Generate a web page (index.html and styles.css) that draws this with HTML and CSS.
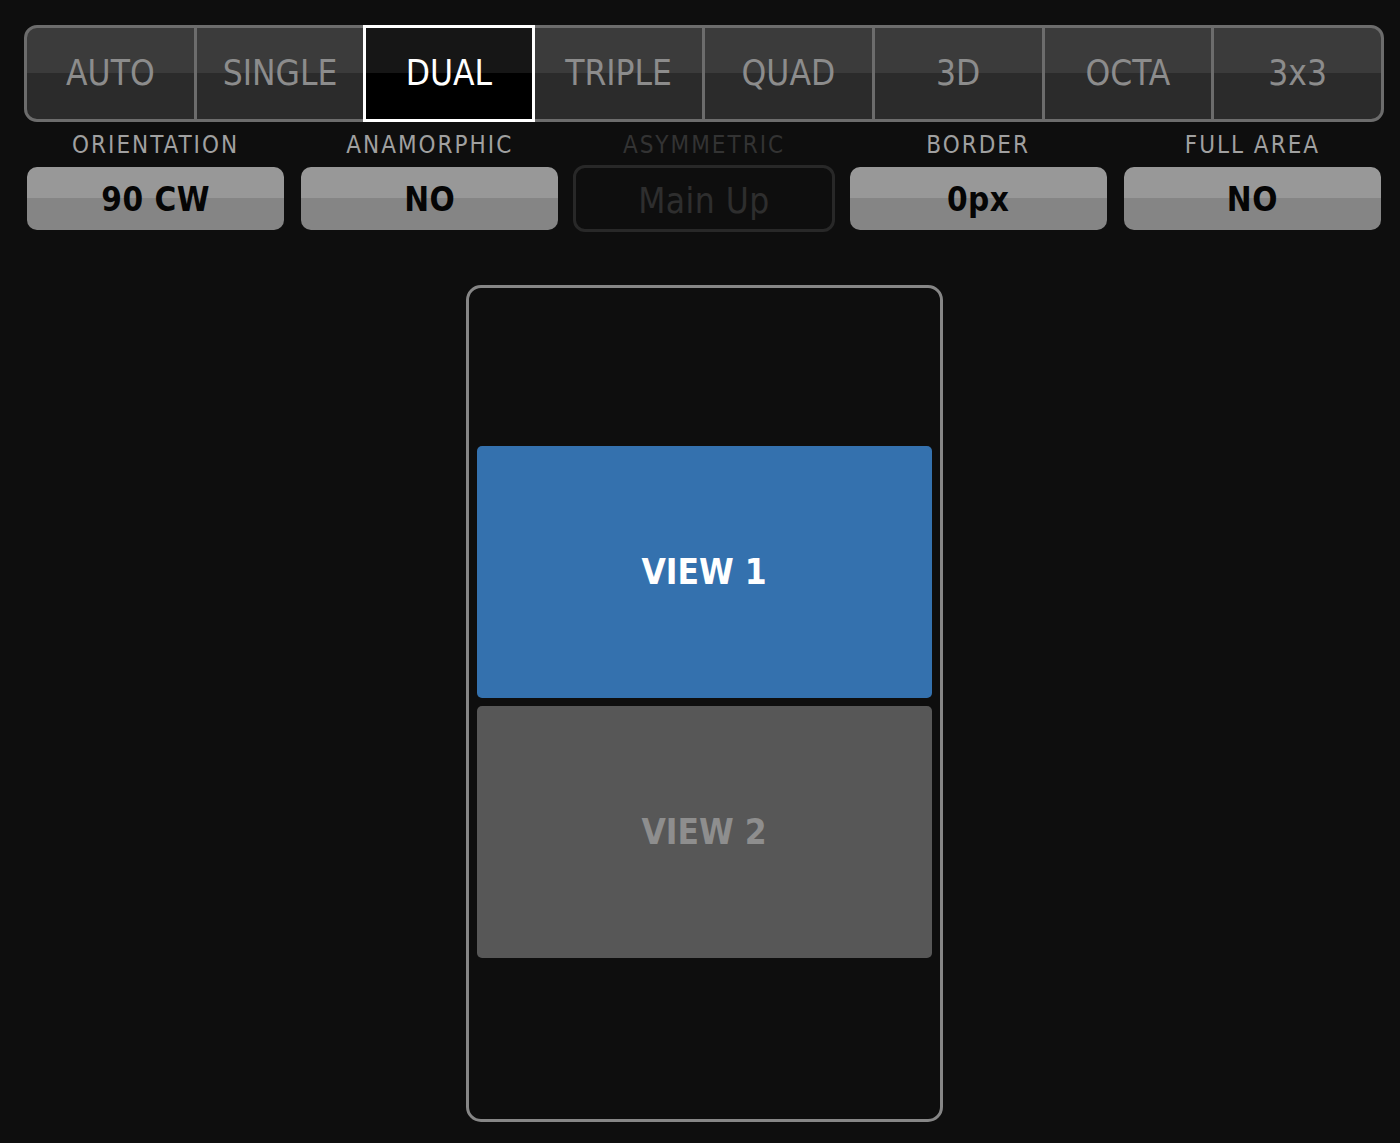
FILE: index.html
```html
<!DOCTYPE html>
<html lang="en">
<head>
<meta charset="utf-8">
<title>Layout</title>
<link rel="stylesheet" href="styles.css">
</head>
<body>
<div class="page">
  <div class="segbar">
    <div class="seg">AUTO</div>
    <div class="seg">SINGLE</div>
    <div class="seg active">DUAL</div>
    <div class="seg">TRIPLE</div>
    <div class="seg">QUAD</div>
    <div class="seg">3D</div>
    <div class="seg">OCTA</div>
    <div class="seg">3x3</div>
  </div>
  <div class="options">
    <div class="opt">
      <div class="opt-label">ORIENTATION</div>
      <div class="opt-btn">90 CW</div>
    </div>
    <div class="opt">
      <div class="opt-label">ANAMORPHIC</div>
      <div class="opt-btn">NO</div>
    </div>
    <div class="opt disabled">
      <div class="opt-label">ASYMMETRIC</div>
      <div class="opt-btn">Main Up</div>
    </div>
    <div class="opt">
      <div class="opt-label">BORDER</div>
      <div class="opt-btn">0px</div>
    </div>
    <div class="opt">
      <div class="opt-label">FULL AREA</div>
      <div class="opt-btn">NO</div>
    </div>
  </div>
  <div class="preview-wrap">
    <div class="preview">
      <div class="view view-main">VIEW 1</div>
      <div class="view view-second">VIEW 2</div>
    </div>
  </div>
</div>
</body>
</html>
```

FILE: styles.css
```css
html, body {
  margin: 0;
  padding: 0;
  background: #0e0e0e;
}
body {
  font-family: "DejaVu Sans Condensed", "DejaVu Sans", sans-serif;
  font-stretch: condensed;
  width: 1400px;
  height: 1143px;
  overflow: hidden;
}
.page {
  padding: 25px 0 0 0;
}
.segbar {
  margin-left: 24px;
  width: 1360px;
  height: 97px;
  box-sizing: border-box;
  border: 3px solid #6c6c6c;
  border-radius: 13px;
  display: flex;
  background: linear-gradient(to bottom, #3b3b3b 0, #3b3b3b 49%, #2b2b2b 49%, #2b2b2b 100%);
}
.seg {
  flex: 1;
  display: flex;
  align-items: center;
  justify-content: center;
  color: #8c8c8c;
  font-size: 35px;
  letter-spacing: 0;
  padding-bottom: 2px;
  border-left: 3px solid #6c6c6c;
}
.seg:first-child {
  border-left: none;
}
.seg.active {
  color: #ffffff;
  border: 3px solid #ffffff;
  margin: -3px 0 -3px -1px;
  background: linear-gradient(to bottom, #161616 0, #161616 49%, #000 49%, #000 100%);
}
.seg.active + .seg {
  border-left: none;
}
.options {
  margin: 9px 0 0 27px;
  width: 1354px;
  display: grid;
  grid-template-columns: repeat(5, 1fr);
  column-gap: 17px;
}
.opt {
  display: flex;
  flex-direction: column;
  align-items: stretch;
}
.opt-label {
  text-align: center;
  color: #a0a0a0;
  font-size: 24px;
  letter-spacing: 2px;
  line-height: 28px;
  height: 28px;
  margin-bottom: 8px;
}
.opt-btn {
  height: 63px;
  box-sizing: border-box;
  border-radius: 10px;
  display: flex;
  align-items: center;
  justify-content: center;
  color: #050505;
  font-size: 33px;
  font-weight: bold;
  letter-spacing: 0.5px;
  padding-top: 2px;
  background: linear-gradient(to bottom, #989898 0, #989898 50%, #858585 50%, #858585 100%);
}
.opt.disabled .opt-label {
  color: #333333;
}
.opt.disabled .opt-btn {
  background: transparent;
  border: 3px solid #282828;
  border-radius: 12px;
  color: #2e2e2e;
  font-weight: normal;
  font-size: 35px;
  margin: -2px -2px 0 -2px;
  height: 67px;
  padding-top: 4px;
}
.preview-wrap {
  margin: 53px 0 0 27px;
  width: 1354px;
  display: flex;
  justify-content: center;
}
.preview {
  width: 477px;
  height: 837px;
  box-sizing: border-box;
  border: 3px solid #868686;
  border-radius: 15px;
  padding: 0 8px 3px 8px;
  display: flex;
  flex-direction: column;
  justify-content: center;
  gap: 8px;
}
.view {
  height: 252px;
  border-radius: 5px;
  display: flex;
  align-items: center;
  justify-content: center;
  font-size: 35px;
  font-weight: bold;
  letter-spacing: 0;
}
.view-main {
  background: #3471ae;
  color: #ffffff;
}
.view-second {
  background: #575757;
  color: #8e8e8e;
}
```
